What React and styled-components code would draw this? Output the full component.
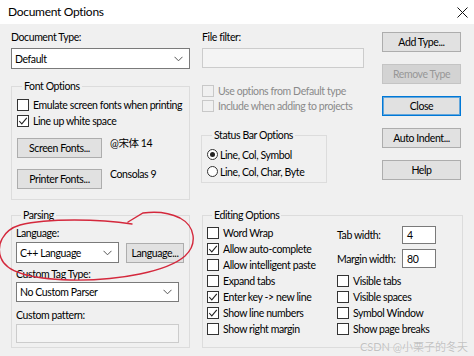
import React from 'react';
import styled, { createGlobalStyle } from 'styled-components';

const GlobalStyle = createGlobalStyle`
  html, body {
    margin: 0;
    padding: 0;
    background: #f0f0f0;
  }
  body {
    font-family: Lato, "Liberation Sans", "Noto Sans CJK SC", sans-serif;
    font-size: 10.5px;
    letter-spacing: -0.4px;
    color: #000;
  }
`;

const Window = styled.div`
  position: relative;
  width: 474px;
  height: 356px;
  overflow: hidden;
  background: #f0f0f0;
`;

const TitleBar = styled.div`
  height: 24px;
  background: #fff;
  display: flex;
  align-items: center;
  justify-content: space-between;
  padding: 0 6px 0 8px;
  box-sizing: border-box;
`;

const Title = styled.div`
  font-size: 12px;
  letter-spacing: -0.3px;
  line-height: 16px;
`;

const Body = styled.div`
  padding: 6px 0 0 11px;
`;

const TopRow = styled.div`
  display: flex;
  align-items: flex-start;
`;

const Column = styled.div`
  display: flex;
  flex-direction: column;
  width: ${p => p.$w}px;
  margin-left: ${p => p.$ml || 0}px;
  padding-top: ${p => p.$pt || 0}px;
  gap: ${p => p.$gap || 0}px;
`;

const Label = styled.div`
  line-height: 14px;
  height: 14px;
  margin-top: ${p => p.$mt || 0}px;
  white-space: nowrap;
  color: ${p => (p.$disabled ? '#8a8a8a' : '#000')};
`;

const Select = styled.div`
  display: flex;
  align-items: center;
  justify-content: space-between;
  box-sizing: border-box;
  width: ${p => p.$w}px;
  height: ${p => p.$h || 21}px;
  margin-top: ${p => p.$mt || 0}px;
  padding: 0 6px 0 3px;
  background: #fff;
  border: 1px solid #7a7a7a;
  white-space: nowrap;
`;

const Input = styled.div`
  display: flex;
  align-items: center;
  box-sizing: border-box;
  width: ${p => p.$w}px;
  height: ${p => p.$h || 20}px;
  margin-top: ${p => p.$mt || 0}px;
  padding-left: 4px;
  background: ${p => (p.$disabled ? '#f4f4f4' : '#fff')};
  border: 1px solid ${p => (p.$disabled ? '#cccccc' : '#7a7a7a')};
`;

const Group = styled.fieldset`
  margin: ${p => p.$m || '0'};
  padding: ${p => p.$pad};
  width: ${p => p.$w}px;
  min-width: 0;
  box-sizing: border-box;
  border: 1px solid #dcdcdc;
`;

const Legend = styled.legend`
  margin-left: 5px;
  padding: 0 2px;
  line-height: 12px;
`;

const Check = styled.div`
  display: flex;
  align-items: center;
  height: ${p => p.$h || 16}px;
  margin-top: ${p => p.$mt || 0}px;
  white-space: nowrap;
  color: ${p => (p.$disabled ? '#8a8a8a' : '#000')};
`;

const Box = styled.span`
  display: flex;
  align-items: center;
  justify-content: center;
  flex-shrink: 0;
  width: 12px;
  height: 12px;
  box-sizing: border-box;
  margin-right: 4px;
  background: ${p => (p.$disabled ? 'transparent' : '#fff')};
  border: 1px solid ${p => (p.$disabled ? '#c8c8c8' : '#333')};
`;

const Radio = styled.span`
  display: flex;
  align-items: center;
  justify-content: center;
  flex-shrink: 0;
  width: 11px;
  height: 11px;
  box-sizing: border-box;
  margin: 0 2px 0 0;
  border-radius: 50%;
  background: #fff;
  border: 1px solid #333;
  &::after {
    content: '';
    display: ${p => (p.$on ? 'block' : 'none')};
    width: 5px;
    height: 5px;
    border-radius: 50%;
    background: #222;
  }
`;

const Button = styled.div`
  display: flex;
  align-items: center;
  justify-content: center;
  box-sizing: border-box;
  width: ${p => p.$w || 79}px;
  height: ${p => p.$h || 20}px;
  flex-shrink: 0;
  white-space: nowrap;
  background: ${p => (p.$disabled ? '#d3d3d3' : '#e1e1e1')};
  color: ${p => (p.$disabled ? '#979797' : '#000')};
  border: 1px solid ${p => (p.$primary ? '#0078d7' : p.$disabled ? '#c4c4c4' : '#adadad')};
  box-shadow: ${p => (p.$primary ? 'inset 0 0 0 1px rgba(0, 120, 215, 0.55)' : 'none')};
`;

const FontRow = styled.div`
  display: flex;
  align-items: flex-start;
  gap: 8px;
  margin-top: ${p => p.$mt || 0}px;
`;

const FontName = styled.div`
  line-height: 14px;
  margin-top: -2px;
  white-space: nowrap;
`;

const BottomRow = styled.div`
  display: flex;
  align-items: stretch;
  margin-top: 9px;
`;

const LangRow = styled.div`
  display: flex;
  align-items: center;
  gap: 7px;
  margin-top: 2px;
`;

const EditGrid = styled.div`
  display: flex;
`;

const FieldRow = styled.div`
  display: flex;
  align-items: center;
  margin-top: ${p => p.$mt || 0}px;
`;

const FieldLabel = styled.div`
  width: 65px;
  line-height: 14px;
  white-space: nowrap;
`;

const Overlay = styled.svg`
  position: absolute;
  left: 0;
  top: 0;
  pointer-events: none;
`;

const Watermark = styled.div`
  position: absolute;
  right: 6px;
  bottom: 2px;
  font-size: 11px;
  line-height: 14px;
  letter-spacing: 0;
  color: #c2c2c2;
  text-shadow: 0 0 1px #fff;
`;

const Chevron = () => (
  <svg width="9" height="6" viewBox="0 0 9 6">
    <polyline points="0.5,0.8 4.5,4.8 8.5,0.8" fill="none" stroke="#555" strokeWidth="1" />
  </svg>
);

const Tick = () => (
  <svg width="10" height="10" viewBox="0 0 10 10">
    <polyline points="1.2,5 3.8,7.8 8.8,1.8" fill="none" stroke="#222" strokeWidth="1.1" />
  </svg>
);

const CheckBox = ({ on, disabled, children, h, mt }) => (
  <Check $disabled={disabled} $h={h} $mt={mt}>
    <Box $disabled={disabled}>{on && <Tick />}</Box>
    {children}
  </Check>
);

const leftEdit = [
  ['Word Wrap', false],
  ['Allow auto-complete', true],
  ['Allow intelligent paste', false],
  ['Expand tabs', false],
  ['Enter key -> new line', true],
  ['Show line numbers', true],
  ['Show right margin', false],
];

const rightEdit = ['Visible tabs', 'Visible spaces', 'Symbol Window', 'Show page breaks'];

export default function App() {
  return (
    <Window>
      <GlobalStyle />
      <TitleBar>
        <Title>Document Options</Title>
        <svg width="11" height="11" viewBox="0 0 11 11">
          <path d="M0.5 0.5 L10.5 10.5 M10.5 0.5 L0.5 10.5" stroke="#111" strokeWidth="1" />
        </svg>
      </TitleBar>

      <Body>
        <TopRow>
          <Column $w={179}>
            <Label>Document Type:</Label>
            <Select $w={179} $mt={4}>
              <span>Default</span>
              <Chevron />
            </Select>
            <Group $w={179} $pad="5px 4px 10px 5px" $m="11px 0 0 0">
              <Legend>Font Options</Legend>
              <CheckBox>Emulate screen fonts when printing</CheckBox>
              <CheckBox on>Line up white space</CheckBox>
              <FontRow $mt={9}>
                <Button $w={85}>Screen Fonts...</Button>
                <FontName>@宋体 14</FontName>
              </FontRow>
              <FontRow $mt={11}>
                <Button $w={85}>Printer Fonts...</Button>
                <FontName>Consolas 9</FontName>
              </FontRow>
            </Group>
          </Column>

          <Column $w={162} $ml={12}>
            <Label>File filter:</Label>
            <Input $w={162} $mt={4} $disabled />
            <CheckBox disabled h={15} mt={15}>Use options from Default type</CheckBox>
            <CheckBox disabled h={15}>Include when adding to projects</CheckBox>
            <Group $w={126} $pad="5px 4px 2px 5px" $m="16px 0 0 -1px">
              <Legend>Status Bar Options</Legend>
              <Check $h={17}>
                <Radio $on />
                Line, Col, Symbol
              </Check>
              <Check $h={17}>
                <Radio />
                Line, Col, Char, Byte
              </Check>
            </Group>
          </Column>

          <Column $w={79} $ml={18} $pt={2} $gap={12}>
            <Button>Add Type...</Button>
            <Button $disabled>Remove Type</Button>
            <Button $primary>Close</Button>
            <Button>Auto Indent...</Button>
            <Button>Help</Button>
          </Column>
        </TopRow>

        <BottomRow>
          <Group $w={179} $pad="5px 4px 4px 4px">
            <Legend>Parsing</Legend>
            <Label>Language:</Label>
            <LangRow>
              <Select $w={103} $h={21}>
                <span>C++ Language</span>
                <Chevron />
              </Select>
              <Button $w={58}>Language...</Button>
            </LangRow>
            <Label $mt={4}>Custom Tag Type:</Label>
            <Select $w={163} $h={20} $mt={1}>
              <span>No Custom Parser</span>
              <Chevron />
            </Select>
            <Label $mt={6}>Custom pattern:</Label>
            <Input $w={163} $h={19} $mt={2} $disabled />
          </Group>

          <Group $w={261} $pad="4px 4px 9px 4px" $m="0 0 0 12px">
            <Legend>Editing Options</Legend>
            <EditGrid>
              <Column $w={130}>
                {leftEdit.map(([t, on]) => (
                  <CheckBox key={t} on={on}>{t}</CheckBox>
                ))}
              </Column>
              <Column $w={120}>
                <FieldRow $mt={1}>
                  <FieldLabel>Tab width:</FieldLabel>
                  <Input $w={34} $h={18}>4</Input>
                </FieldRow>
                <FieldRow $mt={5}>
                  <FieldLabel>Margin width:</FieldLabel>
                  <Input $w={34} $h={19}>80</Input>
                </FieldRow>
                <Column $w={120} $pt={5}>
                  {rightEdit.map(t => (
                    <CheckBox key={t}>{t}</CheckBox>
                  ))}
                </Column>
              </Column>
            </EditGrid>
          </Group>
        </BottomRow>
      </Body>

      <Overlay width="474" height="356" viewBox="0 0 474 356">
        <path
          d="M132 224 C 100 219, 48 218, 20 225 C 3 230, -4 245, 1 258 C 6 272, 30 279, 70 280 C 120 281, 168 271, 185 256 C 198 244, 195 226, 180 218 C 166 211, 150 212, 143 213 L 128 222"
          fill="none"
          stroke="#d4283c"
          strokeWidth="1.4"
          strokeLinecap="round"
        />
      </Overlay>
      <Watermark>CSDN @小栗子的冬天</Watermark>
    </Window>
  );
}
